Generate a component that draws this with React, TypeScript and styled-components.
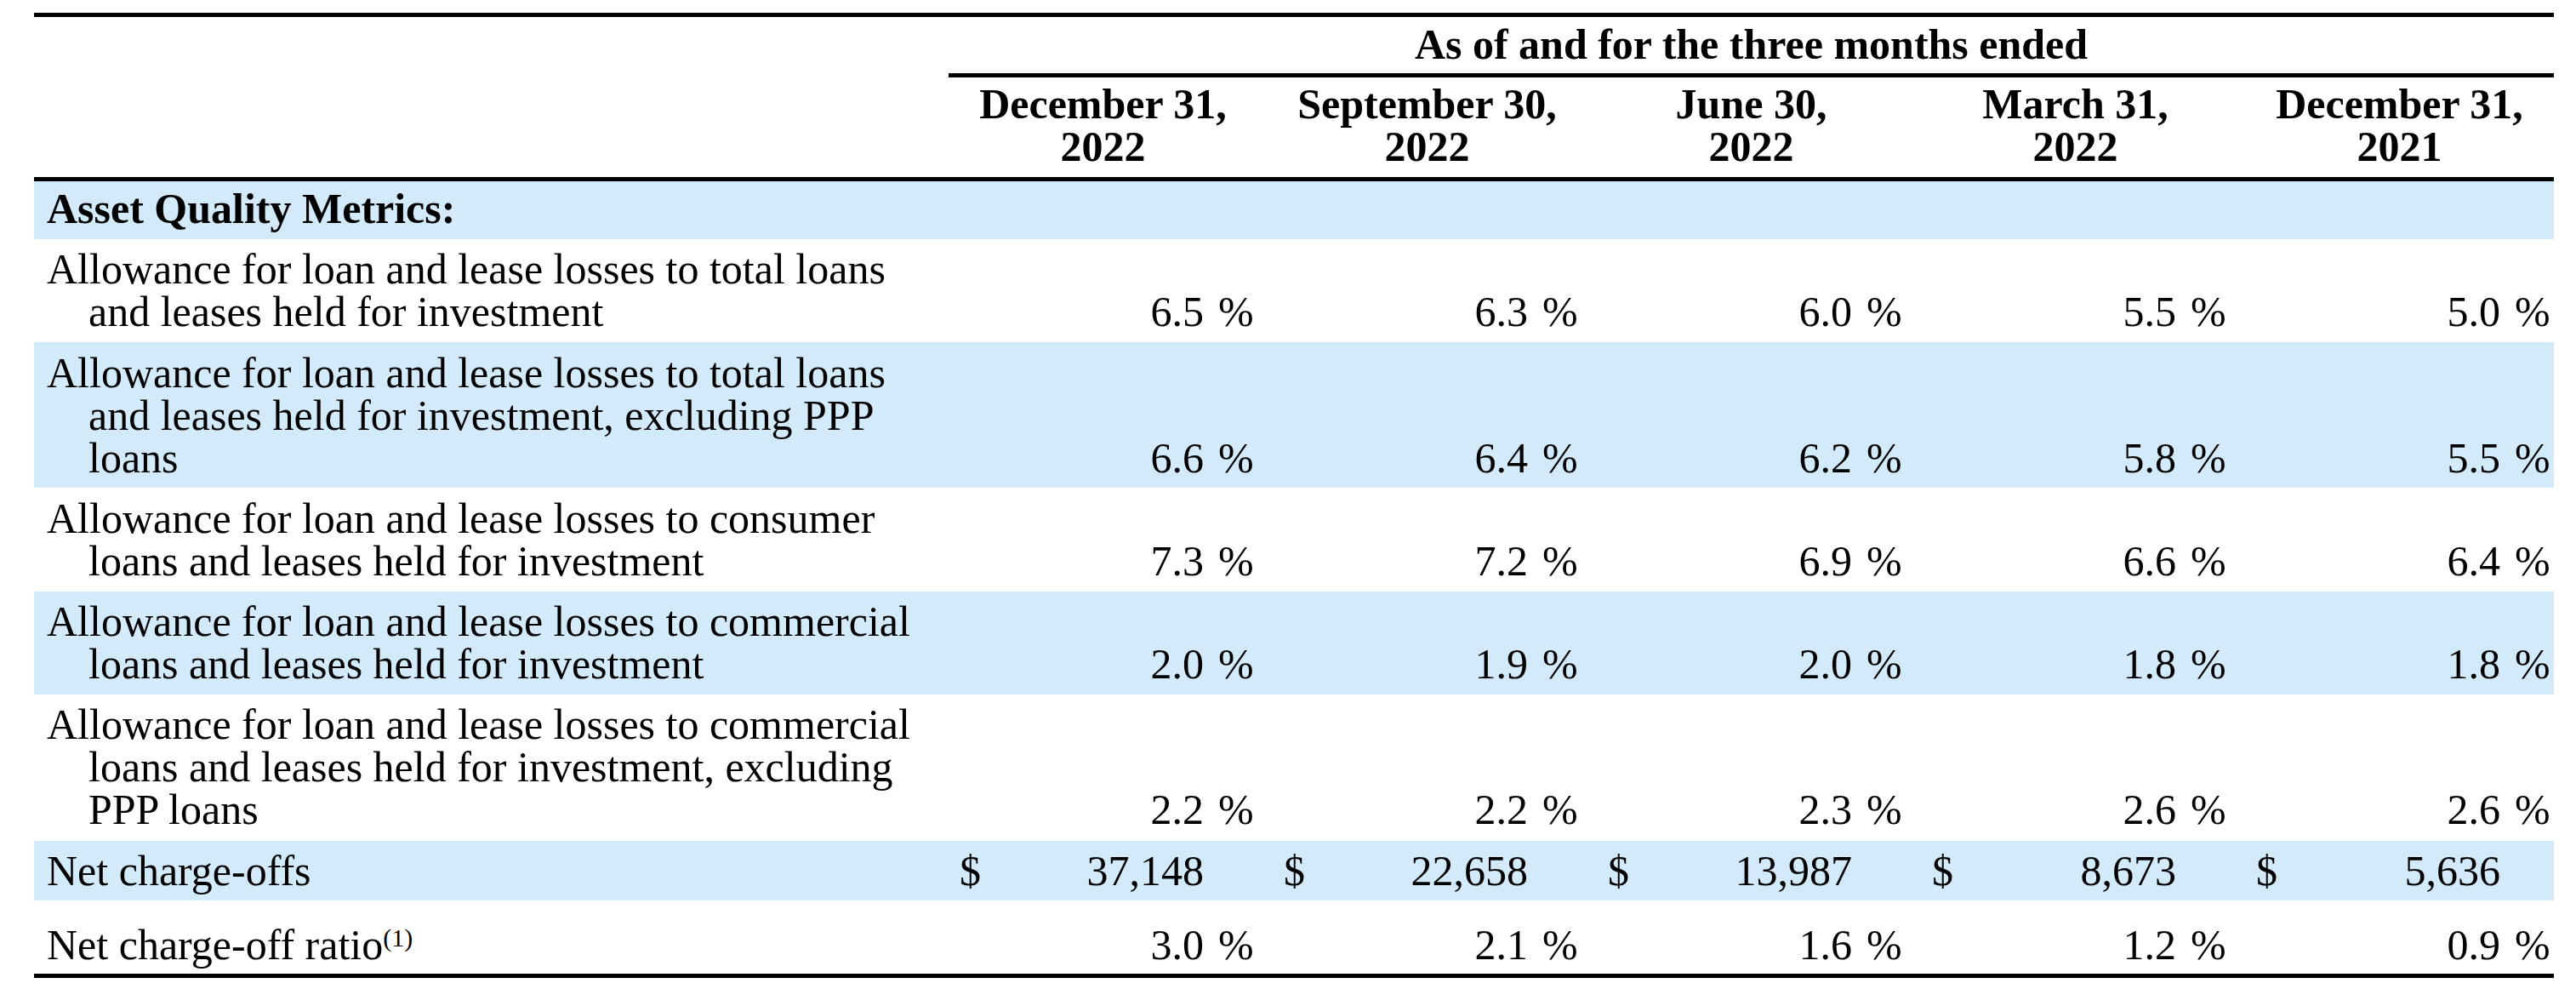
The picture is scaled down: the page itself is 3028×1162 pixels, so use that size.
import React from 'react';
import styled, { createGlobalStyle } from 'styled-components';

const GlobalStyle = createGlobalStyle`
  html, body {
    margin: 0;
    padding: 0;
    background: #ffffff;
  }
`;

const Page = styled.div`
  padding: 15px 0 0 40px;
  font-family: "Liberation Serif", "Times New Roman", serif;
  font-size: 50px;
  line-height: 50px;
  color: #000000;
`;

const Table = styled.div`
  width: 2962px;
  border-top: 5px solid #000000;
  border-bottom: 5px solid #000000;
`;

const Row = styled.div<{ $shade?: boolean; $top?: number; $bottom?: number; $rule?: boolean }>`
  display: grid;
  grid-template-columns: 1057px repeat(5, 381px);
  padding-top: ${(p) => p.$top ?? 10}px;
  padding-bottom: ${(p) => p.$bottom ?? 11}px;
  background: ${(p) => (p.$shade ? '#d2eafa' : 'transparent')};
  border-bottom: ${(p) => (p.$rule ? '5px solid #000000' : 'none')};
`;

const TitleRow = styled.div`
  display: grid;
  grid-template-columns: 1057px repeat(5, 381px);
`;

const Title = styled.div`
  grid-column: 2 / -1;
  margin-left: 18px;
  padding: 7px 0 9px;
  border-bottom: 5px solid #000000;
  text-align: center;
  font-weight: 700;
  white-space: nowrap;
`;

const DateHead = styled.div`
  margin-left: 18px;
  text-align: center;
  font-weight: 700;
  white-space: nowrap;
`;

const Label = styled.div<{ $bold?: boolean }>`
  padding-left: 15px;
  font-weight: ${(p) => (p.$bold ? 700 : 400)};
  white-space: nowrap;
`;

const Line = styled.div<{ $indent?: boolean }>`
  padding-left: ${(p) => (p.$indent ? 49 : 0)}px;
`;

const Note = styled.sup`
  font-size: 30px;
  line-height: 0;
  vertical-align: 15px;
`;

const Value = styled.div`
  align-self: end;
  display: grid;
  grid-template-columns: 25px 1fr 59px;
  padding: 0 4px 0 31px;
  white-space: nowrap;
`;

const Dollar = styled.span`
  text-align: left;
`;

const Amount = styled.span`
  text-align: right;
`;

const Suffix = styled.span`
  padding-left: 17px;
  text-align: left;
`;

type Metric = {
  lines: string[];
  values: string[];
  money?: boolean;
  note?: string;
  shade: boolean;
  top: number;
  bottom: number;
};

const dates = [
  ['December 31,', '2022'],
  ['September 30,', '2022'],
  ['June 30,', '2022'],
  ['March 31,', '2022'],
  ['December 31,', '2021'],
];

const metrics: Metric[] = [
  {
    lines: ['Allowance for loan and lease losses to total loans', 'and leases held for investment'],
    values: ['6.5', '6.3', '6.0', '5.5', '5.0'],
    shade: false,
    top: 10,
    bottom: 11,
  },
  {
    lines: [
      'Allowance for loan and lease losses to total loans',
      'and leases held for investment, excluding PPP',
      'loans',
    ],
    values: ['6.6', '6.4', '6.2', '5.8', '5.5'],
    shade: true,
    top: 11,
    bottom: 10,
  },
  {
    lines: ['Allowance for loan and lease losses to consumer', 'loans and leases held for investment'],
    values: ['7.3', '7.2', '6.9', '6.6', '6.4'],
    shade: false,
    top: 11,
    bottom: 11,
  },
  {
    lines: ['Allowance for loan and lease losses to commercial', 'loans and leases held for investment'],
    values: ['2.0', '1.9', '2.0', '1.8', '1.8'],
    shade: true,
    top: 10,
    bottom: 11,
  },
  {
    lines: [
      'Allowance for loan and lease losses to commercial',
      'loans and leases held for investment, excluding',
      'PPP loans',
    ],
    values: ['2.2', '2.2', '2.3', '2.6', '2.6'],
    shade: false,
    top: 10,
    bottom: 12,
  },
  {
    lines: ['Net charge-offs'],
    values: ['37,148', '22,658', '13,987', '8,673', '5,636'],
    money: true,
    shade: true,
    top: 10,
    bottom: 10,
  },
  {
    lines: ['Net charge-off ratio'],
    note: '(1)',
    values: ['3.0', '2.1', '1.6', '1.2', '0.9'],
    shade: false,
    top: 27,
    bottom: 9,
  },
];

const App = () => (
  <>
    <GlobalStyle />
    <Page>
      <Table>
        <TitleRow>
          <Title>As of and for the three months ended</Title>
        </TitleRow>
        <Row $top={6} $bottom={11} $rule>
          <div />
          {dates.map(([month, year], index) => (
            <DateHead key={index}>
              {month}
              <br />
              {year}
            </DateHead>
          ))}
        </Row>
        <Row $shade $top={7} $bottom={11}>
          <Label $bold>Asset Quality Metrics:</Label>
        </Row>
        {metrics.map((metric, index) => (
          <Row key={index} $shade={metric.shade} $top={metric.top} $bottom={metric.bottom}>
            <Label>
              {metric.lines.map((line, i) => (
                <Line key={i} $indent={i > 0}>
                  {line}
                  {metric.note && i === metric.lines.length - 1 && <Note>{metric.note}</Note>}
                </Line>
              ))}
            </Label>
            {metric.values.map((value, i) => (
              <Value key={i}>
                <Dollar>{metric.money ? '$' : ''}</Dollar>
                <Amount>{value}</Amount>
                <Suffix>{metric.money ? '' : '%'}</Suffix>
              </Value>
            ))}
          </Row>
        ))}
      </Table>
    </Page>
  </>
);

export default App;
